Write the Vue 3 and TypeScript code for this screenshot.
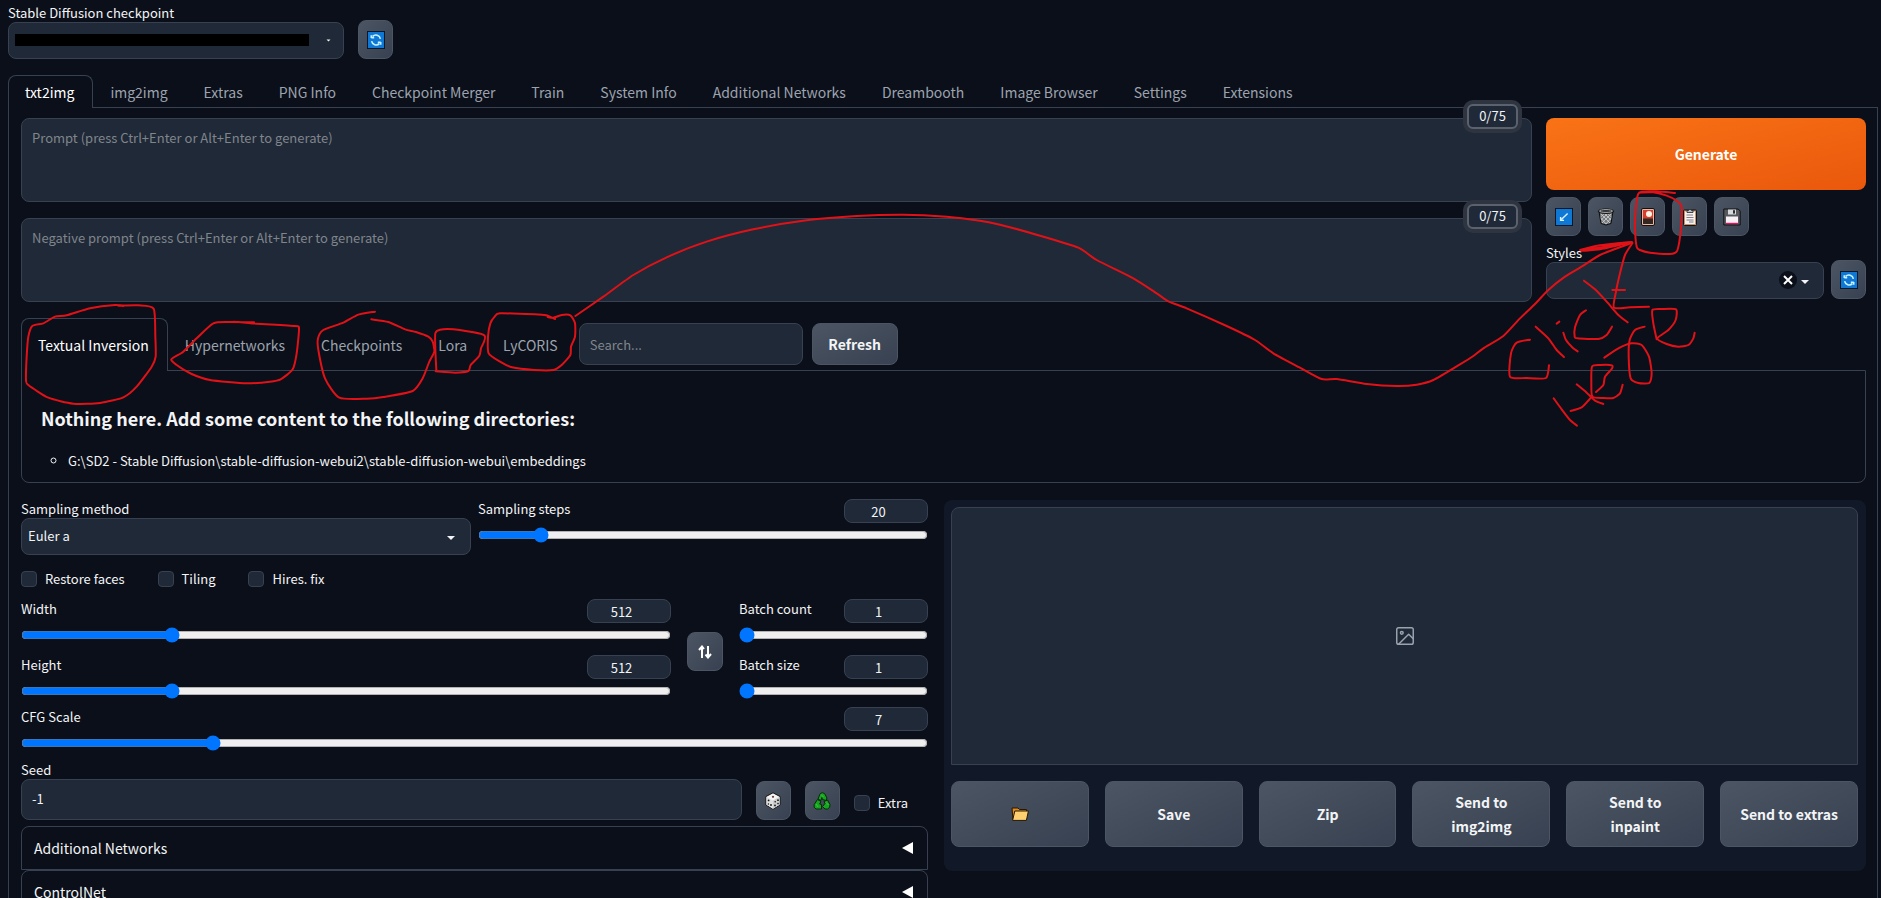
<script setup lang="ts">
import { ref } from 'vue'

type Point = [number, number]

const tabs = ['txt2img', 'img2img', 'Extras', 'PNG Info', 'Checkpoint Merger', 'Train', 'System Info', 'Additional Networks', 'Dreambooth', 'Image Browser', 'Settings', 'Extensions']
const networkTabs = ['Textual Inversion', 'Hypernetworks', 'Checkpoints', 'Lora', 'LyCORIS']
const activeTab = ref('txt2img')
const activeNetwork = ref('Textual Inversion')
const prompts = [
  { id: 'prompt', placeholder: 'Prompt (press Ctrl+Enter or Alt+Enter to generate)' },
  { id: 'negative', placeholder: 'Negative prompt (press Ctrl+Enter or Alt+Enter to generate)' },
]
const toggles = ['Restore faces', 'Tiling', 'Hires. fix']
const steps = ref(20)
const width = ref(512)
const height = ref(512)
const batchCount = ref(1)
const batchSize = ref(1)
const cfg = ref(7)
const seed = ref('-1')
const accordions = ['Additional Networks', 'ControlNet']
const sendButtons = ['Save', 'Zip', 'Send to img2img', 'Send to inpaint', 'Send to extras']

/* Pen strokes, each a list of points in thirds of a pixel from its own origin. */
const strokes: { at: Point; points: Point[] }[] = [
  { at: [0, 870], points: [[370, 48], [345, 45], [270, 55], [200, 76], [165, 80], [130, 100], [97, 108], [85, 140], [80, 200], [78, 270], [85, 285], [145, 323], [220, 341], [300, 339], [370, 322], [410, 290], [455, 230], [467, 200], [466, 140], [461, 56], [415, 46], [355, 47]] },
  { at: [0, 870], points: [[762, 97], [690, 96], [640, 100], [590, 145], [550, 185], [514, 208], [530, 225], [575, 252], [630, 270], [740, 280], [810, 275], [842, 268], [878, 238], [890, 190], [897, 115], [885, 108], [770, 101], [700, 95]] },
  { at: [0, 870], points: [[1125, 65], [1075, 74], [1030, 98], [970, 120], [954, 145], [955, 180], [975, 265], [1018, 323], [1100, 326], [1150, 321], [1238, 303], [1268, 265], [1288, 215], [1303, 185], [1298, 155], [1285, 140], [1248, 126], [1215, 118], [1165, 96], [1114, 88]] },
  { at: [0, 870], points: [[1309, 240], [1306, 180], [1306, 130], [1320, 119], [1360, 118], [1453, 136], [1443, 175], [1438, 197], [1412, 225], [1405, 243], [1365, 248], [1307, 244]] },
  { at: [0, 0], points: [[1665, 957], [1638, 946], [1603, 943], [1500, 940], [1484, 950], [1471, 970], [1464, 1010], [1466, 1060], [1500, 1085], [1536, 1102], [1603, 1110], [1660, 1110], [1685, 1095], [1711, 1065], [1713, 1040], [1725, 1010], [1725, 970], [1711, 946], [1685, 945], [1660, 953], [1643, 951]] },
  { at: [1440, 180], points: [[286, 768], [370, 710], [460, 645], [560, 592], [680, 545], [820, 508], [980, 481], [1130, 468], [1270, 464], [1400, 470], [1500, 482], [1560, 494], [1680, 527], [1795, 563], [1850, 600], [1960, 655], [2030, 700], [2065, 724], [2120, 745], [2240, 798], [2325, 840], [2380, 880], [2460, 923], [2525, 957], [2570, 957], [2660, 972], [2750, 978], [2810, 974], [2860, 960], [2940, 913], [2980, 888], [3010, 865], [3070, 828], [3120, 775], [3165, 732], [3205, 690], [3255, 650], [3310, 617], [3360, 585], [3430, 558], [3457, 548]] },
  { at: [4320, 660], points: [[420, 90], [480, 76], [575, 66], [535, 76], [480, 88], [425, 92], [560, 70]] },
  { at: [4320, 660], points: [[577, 70], [555, 105], [540, 160], [528, 215], [522, 263], [570, 262], [627, 260]] },
  { at: [4320, 660], points: [[517, 210], [555, 210]] },
  { at: [4320, 660], points: [[432, 182], [465, 208], [500, 245], [535, 285], [563, 307]] },
  { at: [4320, 660], points: [[438, 271], [420, 285], [405, 322], [404, 350], [412, 355], [475, 357], [500, 345], [516, 320]] },
  { at: [4320, 660], points: [[650, 358], [640, 310], [637, 270], [665, 267], [708, 268], [707, 300], [685, 330], [652, 355], [680, 372], [715, 380], [745, 375], [760, 355], [764, 338]] },
  { at: [4320, 660], points: [[350, 311], [358, 305]] },
  { at: [4320, 660], points: [[370, 338], [378, 360], [398, 383], [413, 394]] },
  { at: [4320, 660], points: [[287, 320], [325, 355], [350, 390], [372, 411]] },
  { at: [4320, 660], points: [[270, 359], [230, 368], [213, 400], [210, 470], [260, 474], [318, 474], [327, 436]] },
  { at: [4320, 660], points: [[614, 320], [585, 330], [569, 360], [566, 410], [572, 475], [595, 489], [628, 489], [635, 460], [627, 410], [605, 375], [575, 370], [535, 385], [493, 413]] },
  { at: [4320, 660], points: [[468, 516], [490, 495], [495, 470], [515, 447], [516, 436], [480, 435], [456, 440], [454, 490], [457, 530], [490, 534], [520, 534], [540, 520], [548, 494]] },
  { at: [4320, 660], points: [[410, 493], [440, 518], [465, 542], [490, 552]] },
  { at: [4320, 660], points: [[457, 528], [442, 545], [425, 562], [392, 573]] },
  { at: [4320, 660], points: [[341, 535], [365, 568], [390, 600], [411, 617]] },
  { at: [4320, 180], points: [[705, 399], [650, 394], [605, 395], [594, 403], [588, 440], [585, 500], [590, 560], [600, 570], [630, 578], [690, 582], [710, 575], [718, 545], [724, 490], [725, 440], [712, 423], [680, 407], [640, 397], [598, 398]] },
]

/** Turns a list of points into a smooth path through all of them. */
function penPath(points: Point[]): string {
  let d = `M${points[0][0]} ${points[0][1]}`
  for (let i = 0; i < points.length - 1; i++) {
    const a = points[Math.max(0, i - 1)]
    const b = points[i]
    const c = points[i + 1]
    const e = points[Math.min(points.length - 1, i + 2)]
    const x1 = b[0] + (c[0] - a[0]) / 9
    const y1 = b[1] + (c[1] - a[1]) / 9
    const x2 = c[0] - (e[0] - b[0]) / 9
    const y2 = c[1] - (e[1] - b[1]) / 9
    d += `C${x1} ${y1} ${x2} ${y2} ${c[0]} ${c[1]}`
  }
  return d
}
</script>

<template>
  <div class="app">
    <svg class="sprite" aria-hidden="true">
      <symbol id="i-refresh" viewBox="0 0 18 18">
        <rect width="18" height="18" fill="#06182c" />
        <rect x="1" y="1" width="16" height="16" fill="#0f78d4" />
        <g fill="none" stroke="#c9f1ff" stroke-width="1.6">
          <path d="M4.6 10.2A4.6 4.6 0 0 0 12.4 12.6M13.4 7.8A4.6 4.6 0 0 0 5.6 5.4" />
          <path d="M4.3 7V4.2M4.3 6.6H7.2M13.7 11V13.8M13.7 11.4H10.8" />
        </g>
      </symbol>
      <symbol id="i-arrow" viewBox="0 0 18 18">
        <rect width="18" height="18" fill="#06182c" />
        <rect x="1" y="1" width="16" height="16" fill="#0f78d4" />
        <path d="M12.6 5.4L6.4 11.6M5.6 9V12.4H9" fill="none" stroke="#d8f3ff" stroke-width="1.4" />
      </symbol>
      <symbol id="i-trash" viewBox="0 0 18 18">
        <path d="M2 3.5L4 15.5Q9 18.5 14 15.5L16 3.5Z" fill="#777a7d" stroke="#0b0c0e" />
        <path d="M4 6L13 15M7 5L14 12M10 5L14.5 9M3.8 10L9 16M14 6L5 15M11 5L4.2 12M8 5L3.6 9M14 10L9 16" stroke="#d2d2d2" stroke-width=".8" />
        <ellipse cx="9" cy="3.2" rx="7.6" ry="2.2" fill="#48494b" stroke="#0b0c0e" />
        <ellipse cx="9" cy="3" rx="6.6" ry="1.4" fill="#27282a" stroke="#c9c9c9" stroke-width=".8" />
      </symbol>
      <symbol id="i-card" viewBox="0 0 18 18">
        <rect x="2.5" y=".5" width="13" height="17" rx="1.5" fill="#e9b9a8" stroke="#17100f" />
        <rect x="4" y="2" width="10" height="9" fill="#d63d31" />
        <rect x="4" y="10.5" width="10" height="5.5" fill="#33271f" />
        <circle cx="10" cy="6" r="3" fill="#fff6e4" />
      </symbol>
      <symbol id="i-clipboard" viewBox="0 0 18 18">
        <rect x="2.5" y="2" width="13" height="15.5" rx="1" fill="#c5936d" stroke="#17120f" />
        <rect x="4" y="3.5" width="10" height="12.5" fill="#f5f1ee" />
        <path d="M6 4.5V2.5H7.5Q9-.5 10.5 2.5H12V4.5Z" fill="#b9bdc2" stroke="#222" stroke-width=".8" />
        <path d="M5.5 7H12M5.5 9.5H12.5M5.5 12H12.5M8 14H12.5" stroke="#77707a" stroke-width=".9" />
      </symbol>
      <symbol id="i-floppy" viewBox="0 0 18 18">
        <path d="M.8 1H15.2L17.2 3V17H.8Z" fill="#54575c" stroke="#111" />
        <rect x="5" y="1.5" width="8" height="5" fill="#d6d9dc" />
        <rect x="10" y="2.2" width="2" height="3.4" fill="#2b2d30" />
        <rect x="3" y="8.5" width="12" height="6.5" fill="#f7f1f6" />
        <rect x="3" y="14.8" width="12" height="1.4" fill="#e11466" />
      </symbol>
      <symbol id="i-dice" viewBox="0 0 18 18">
        <path d="M9 .8L16 4.5V13L9 17.2L2 13V4.5Z" fill="#f4f4f4" stroke="#111" />
        <path d="M2.4 4.8L9 8.4V16.8L2.4 12.8Z" fill="#dedede" />
        <path d="M9 8.4L15.6 4.8V12.8L9 16.8Z" fill="#cccccc" />
        <g fill="#151515"><circle cx="9" cy="4.8" r="1.1" fill="#6d3434" /><circle cx="4.6" cy="8.4" r=".9" /><circle cx="7" cy="13" r=".9" /><circle cx="4.4" cy="12" r=".7" /><circle cx="11" cy="13.4" r=".9" /><circle cx="14" cy="8.2" r=".9" /><circle cx="11.2" cy="9.8" r=".8" /><circle cx="14" cy="11.6" r=".8" /></g>
      </symbol>
      <symbol id="i-recycle" viewBox="0 0 18 18">
        <g fill="#16a51e" stroke="#062a08" stroke-linejoin="round">
          <path d="M5 7L7 2Q9-.5 11.5 1.5L14 6L13 8.5L9.5 7.5L8.8 5.5L7.8 8.5Z" />
          <path d="M4.5 7.5L8 9.5L6.5 12L8.5 12.5V17H3Q.2 15.5 1.2 12.5Z" />
          <path d="M9.5 14.5L12 11.5L11 9.5L14.5 8L17 12.5Q17.5 16 14.5 17H12Z" />
        </g>
        <path d="M8 2.5L10.5 5M3 12L5 15M13 10.5L15.5 13" stroke="#3fc445" stroke-width="1" />
      </symbol>
      <symbol id="i-folder" viewBox="0 0 18 18">
        <path d="M1 3H7L8.5 4.5H15.5V15H2Z" fill="#e08d1c" stroke="#271604" />
        <path d="M3.8 6H17.4L15.4 15.4H1.6Z" fill="#ffd070" stroke="#271604" />
      </symbol>
      <symbol id="i-caret" viewBox="0 0 18 18"><path d="M5 7H13L9 11Z" fill="currentColor" /></symbol>
      <symbol id="i-swap" viewBox="0 0 14 14">
        <path d="M4 13V2M1 5L4 1.5L6 4M10 1V12M7.5 9.5L10 12.5L13 9" fill="none" stroke="#fff" stroke-width="2" />
      </symbol>
    </svg>

    <header class="checkpoint">
      <div class="field checkpoint-field">
        <label for="checkpoint">Stable Diffusion checkpoint</label>
        <div class="select-wrap">
          <select id="checkpoint" class="box"><option></option></select>
          <span class="redaction"></span>
          <svg class="caret tiny"><use href="#i-caret" /></svg>
        </div>
      </div>
      <button class="tool" aria-label="Refresh checkpoints"><svg class="emoji"><use href="#i-refresh" /></svg></button>
    </header>

    <nav class="tabs">
      <button v-for="t in tabs" :key="t" class="tab" :class="{ active: t === activeTab }" @click="activeTab = t">{{ t }}</button>
    </nav>

    <main class="panel">
      <section class="top">
        <div class="prompts">
          <div v-for="p in prompts" :key="p.id" class="prompt">
            <textarea :id="p.id" class="box" :placeholder="p.placeholder" :aria-label="p.placeholder"></textarea>
            <span class="counter">0/75</span>
          </div>
        </div>
        <div class="actions">
          <button class="generate">Generate</button>
          <div class="tools">
            <button v-for="i in ['arrow', 'trash', 'card', 'clipboard', 'floppy']" :key="i" class="tool" :aria-label="i">
              <svg class="emoji"><use :href="'#i-' + i" /></svg>
            </button>
          </div>
          <div class="styles-row">
            <div class="field grow">
              <label for="styles">Styles</label>
              <div class="select-wrap">
                <select id="styles" class="box"><option></option></select>
                <button class="clear" aria-label="Clear styles">
                  <svg viewBox="0 0 18 18"><path d="M5 5L13 13M13 5L5 13" stroke="#fff" stroke-width="2" /></svg>
                </button>
                <svg class="caret near"><use href="#i-caret" /></svg>
              </div>
            </div>
            <button class="tool" aria-label="Refresh styles"><svg class="emoji"><use href="#i-refresh" /></svg></button>
          </div>
        </div>
      </section>

      <section class="networks">
        <div class="network-tabs">
          <button v-for="t in networkTabs" :key="t" class="tab" :class="{ active: t === activeNetwork }" @click="activeNetwork = t">{{ t }}</button>
          <div class="network-tools">
            <input class="box search" type="text" placeholder="Search..." aria-label="Search">
            <button class="gray refresh">Refresh</button>
          </div>
        </div>
        <div class="network-panel">
          <h1>Nothing here. Add some content to the following directories:</h1>
          <ul><li>G:\SD2 - Stable Diffusion\stable-diffusion-webui2\stable-diffusion-webui\embeddings</li></ul>
        </div>
      </section>

      <section class="columns">
        <div class="settings">
          <div class="pair">
            <div class="field">
              <label for="sampler">Sampling method</label>
              <div class="select-wrap">
                <select id="sampler" class="box"><option>Euler a</option></select>
                <svg class="caret"><use href="#i-caret" /></svg>
              </div>
            </div>
            <div class="slider">
              <div class="slider-head"><label for="steps">Sampling steps</label><input v-model="steps" class="box num" type="number" aria-label="Sampling steps value"></div>
              <input id="steps" v-model="steps" type="range" min="1" max="150">
            </div>
          </div>

          <div class="checks">
            <label v-for="t in toggles" :key="t" class="check"><input type="checkbox">{{ t }}</label>
          </div>

          <div class="dims">
            <div class="stack grow">
              <div class="slider">
                <div class="slider-head"><label for="w">Width</label><input v-model="width" class="box num" type="number" aria-label="Width value"></div>
                <input id="w" v-model="width" type="range" min="64" max="2048" step="8">
              </div>
              <div class="slider">
                <div class="slider-head"><label for="h">Height</label><input v-model="height" class="box num" type="number" aria-label="Height value"></div>
                <input id="h" v-model="height" type="range" min="64" max="2048" step="8">
              </div>
            </div>
            <button class="tool swap-button" aria-label="Swap width and height"><svg class="swap"><use href="#i-swap" /></svg></button>
            <div class="stack batch">
              <div class="slider">
                <div class="slider-head"><label for="bc">Batch count</label><input v-model="batchCount" class="box num" type="number" aria-label="Batch count value"></div>
                <input id="bc" v-model="batchCount" type="range" min="1" max="100">
              </div>
              <div class="slider">
                <div class="slider-head"><label for="bs">Batch size</label><input v-model="batchSize" class="box num" type="number" aria-label="Batch size value"></div>
                <input id="bs" v-model="batchSize" type="range" min="1" max="8">
              </div>
            </div>
          </div>

          <div class="slider cfg">
            <div class="slider-head"><label for="cfg">CFG Scale</label><input v-model="cfg" class="box num" type="number" aria-label="CFG Scale value"></div>
            <input id="cfg" v-model="cfg" type="range" min="1" max="30" step="0.5">
          </div>

          <div class="seed-row">
            <div class="field grow">
              <label for="seed">Seed</label>
              <input id="seed" v-model="seed" class="box seed" type="text">
            </div>
            <button class="tool" aria-label="Random seed"><svg class="emoji"><use href="#i-dice" /></svg></button>
            <button class="tool" aria-label="Reuse seed"><svg class="emoji"><use href="#i-recycle" /></svg></button>
            <label class="check extra"><input type="checkbox">Extra</label>
          </div>

          <div class="accordions">
            <button v-for="a in accordions" :key="a" class="accordion">
              <span>{{ a }}</span>
              <svg viewBox="0 0 12 12"><path d="M0 6L11 0V12Z" fill="#fff" /></svg>
            </button>
          </div>
        </div>

        <div class="output">
          <div class="gallery">
            <svg viewBox="0 0 24 24" fill="none" stroke="#9ca3af" stroke-width="1.6" stroke-linecap="round" stroke-linejoin="round">
              <rect x="3" y="3" width="18" height="18" rx="2" /><circle cx="8.5" cy="8.5" r="1.5" /><path d="M21 15L16 10L5 21" />
            </svg>
          </div>
          <div class="output-buttons">
            <button class="gray" aria-label="Open folder"><svg class="emoji"><use href="#i-folder" /></svg></button>
            <button v-for="b in sendButtons" :key="b" class="gray">{{ b }}</button>
          </div>
        </div>
      </section>
    </main>

    <svg class="pen" viewBox="0 0 5643 2694" aria-hidden="true">
      <path v-for="(s, i) in strokes" :key="i" :d="penPath(s.points)" :transform="`translate(${s.at[0]} ${s.at[1]})`" />
    </svg>
  </div>
</template>

<style>
html { scrollbar-width: none; }
body { margin: 0; background: #0b0f19; overflow-x: hidden; }
</style>

<style scoped>
* { box-sizing: border-box; }
.app {
  position: relative;
  height: 100vh;
  overflow: hidden auto;
  scrollbar-width: none;
  padding: 3px 3px 0 8px;
  background: #0b0f19;
  color: #f3f4f6;
  font: 13px/20px "Noto Sans CJK SC", "Open Sans", sans-serif;
}
button, input, select, textarea { font: inherit; color: inherit; margin: 0; }
button { cursor: pointer; padding: 0; }
.sprite { position: absolute; width: 0; height: 0; }
.grow { flex: 1; }
.box {
  display: block;
  width: 100%;
  background: #1f2937;
  border: 1px solid #374151;
  border-radius: 8px;
  outline: none;
}
.box::placeholder { color: #80858c; opacity: 1; }
.field label { display: block; line-height: 19px; }
select.box { appearance: none; height: 37px; padding: 0 6px 2px; }
.select-wrap { position: relative; }
.caret { position: absolute; right: 11px; top: 11px; width: 18px; height: 18px; pointer-events: none; }
.caret.near { right: 10px; }
.caret.tiny { width: 9px; height: 9px; top: 14px; }
.redaction { position: absolute; left: 7px; right: 35px; top: 12px; height: 12px; background: #000; pointer-events: none; }
.clear { position: absolute; right: 27px; top: 9px; width: 18px; height: 18px; border: 0; border-radius: 50%; background: #0b0f19; }
.clear svg { display: block; }

.checkpoint { display: flex; align-items: flex-end; gap: 14px; margin-bottom: 16px; }
.checkpoint-field { width: 336px; }
.tool, .gray {
  border: 1px solid #4b5563;
  border-radius: 8px;
  background: linear-gradient(to bottom right, #4b5563, #374151);
}
.tool { flex: none; display: grid; place-items: center; width: 35px; height: 39px; }
.gray { font-size: 14px; font-weight: 700; line-height: 24px; }
.emoji { display: block; width: 18px; height: 18px; }
.swap { width: 14px; height: 14px; }

.tabs { display: flex; position: relative; z-index: 1; height: 33px; }
.tab {
  padding: 0 18px 0 16px;
  border: 1px solid transparent;
  border-bottom: 0;
  border-radius: 8px 8px 0 0;
  background: none;
  color: #9ca3af;
  font-size: 14px;
  white-space: nowrap;
}
.tab.active { color: #fff; background: #0b0f19; border-color: #374151; }
.panel { margin-top: -1px; border: 1px solid #374151; padding: 10px 11px 0 12px; }

.top { display: grid; grid-template-columns: 1fr 320px; gap: 14px; }
.prompts { display: flex; flex-direction: column; gap: 16px; }
.prompt { position: relative; height: 84px; }
.prompt textarea { height: 84px; padding: 9px 10px; resize: none; }
.counter {
  position: absolute;
  top: -14px;
  right: 14px;
  width: 51px;
  height: 25px;
  border: 2px solid #5b626e;
  border-radius: 6px;
  background: #1f2937;
  box-shadow: 0 0 0 4px #2e3540;
  line-height: 20px;
  text-align: center;
}
.generate {
  display: block;
  width: 100%;
  height: 72px;
  border: 0;
  border-radius: 8px;
  background: linear-gradient(to bottom right, #f97316, #ea580c);
  color: #fff;
  font-size: 14px;
  font-weight: 700;
}
.tools { display: flex; gap: 7px; margin: 7px 0; }
.styles-row { display: flex; align-items: flex-end; gap: 7px; }

.networks { margin-top: 16px; }
.network-tabs { display: flex; height: 53px; }
.network-tools { display: flex; gap: 9px; padding: 5px 0 0 2px; }
.search { width: 224px; height: 42px; padding: 0 10px; }
.refresh { width: 86px; height: 42px; }
.network-panel { margin-top: -1px; padding: 31px 19px 9px; border: 1px solid #374151; border-radius: 0 0 8px 8px; }
.network-tabs .tab.active { position: relative; z-index: 1; }
h1 { margin: 0 0 15px; font-size: 18px; line-height: 32px; font-weight: 700; }
ul { margin: 0; padding-left: 27px; list-style: circle; line-height: 24px; }

.columns { display: grid; grid-template-columns: 907fr 922fr; gap: 16px; margin-top: 16px; }
.settings { min-width: 0; }
.pair { display: grid; grid-template-columns: 1fr 1fr; gap: 7px; }
.slider-head { display: flex; justify-content: space-between; align-items: flex-start; height: 24px; line-height: 19px; }
.num { width: 84px; height: 24px; padding: 0 8px; text-align: center; }
.slider input[type="range"] { display: block; width: 100%; height: 16px; margin: 4px 0 0; accent-color: #0075ff; }
.checks { display: flex; gap: 33px; margin: 16px 0 12px; }
.check { display: flex; align-items: center; gap: 8px; height: 16px; }
.check input { appearance: none; width: 16px; height: 16px; background: #1f2937; border: 1px solid #374151; border-radius: 4px; }
.dims { display: flex; align-items: center; gap: 16px; }
.swap-button { margin-top: 5px; width: 36px; }
.stack { display: grid; gap: 12px; }
.batch { width: 189px; }
.cfg { margin-top: 8px; }
.seed-row { display: flex; align-items: flex-end; gap: 14px; margin-top: 9px; }
.seed { height: 41px; padding: 0 10px 2px; }
.extra { height: 34px; padding-right: 20px; }
.accordions { margin-top: 6px; }
.accordion {
  display: flex;
  align-items: center;
  justify-content: space-between;
  width: 100%;
  height: 44px;
  padding: 0 13px 0 12px;
  border: 1px solid #374151;
  border-radius: 8px 8px 0 0;
  background: none;
  font-size: 14px;
}
.accordion svg { width: 12px; height: 12px; }
.output { align-self: start; margin-top: 1px; padding: 7px 8px 24px 7px; border-radius: 8px; background: #111827; }
.gallery { display: grid; place-items: center; height: 258px; border: 1px solid #374151; border-radius: 8px 8px 0 0; background: #1f2937; }
.gallery svg { width: 22px; height: 22px; }
.output-buttons { display: grid; grid-template-columns: repeat(6, 1fr); gap: 16px; margin-top: 16px; }
.output-buttons .gray { display: grid; place-items: center; height: 66px; padding: 0 16px; }
.pen { position: absolute; left: 0; top: 0; z-index: 2; width: 100%; pointer-events: none; }
.pen path { fill: none; stroke: #e01218; stroke-width: 6; stroke-linecap: round; stroke-linejoin: round; }
</style>
